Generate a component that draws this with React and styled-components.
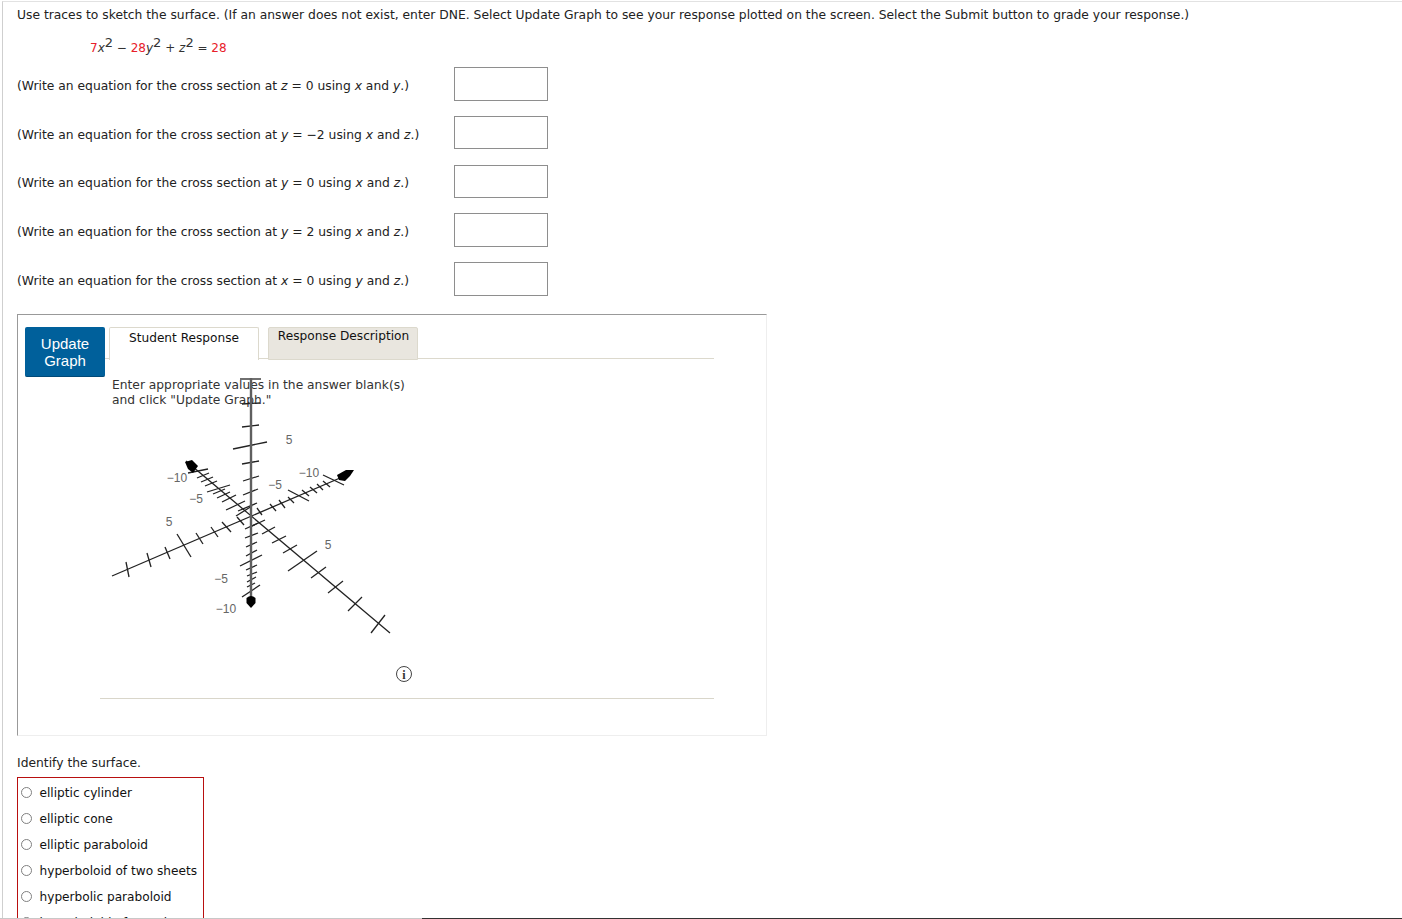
import React from "react";
import styled, { createGlobalStyle } from "styled-components";

const Global = createGlobalStyle`
  html, body { margin: 0; padding: 0; background: #fff; }
  body { font-family: "DejaVu Sans", Verdana, sans-serif; font-size: 12.32px; color: #222; }
`;
const Viewport = styled.div`
  width: 1402px; height: 919px; display: flex; flex-direction: column; overflow: hidden;
`;
const Frame = styled.div`
  flex: 0 0 916px; margin-left: 2px; padding: 0 0 0 14px; overflow: hidden;
  border-left: 1px solid #cfcfcf; border-top: 1px solid #e2e2e2; margin-top: 1px;
`;
const BottomRule = styled.div`
  flex: 0 0 1px; display: grid; grid-template-columns: 422px 1fr; margin-bottom: 1px;
`;
const RuleLight = styled.div`background: #c8c8c8;`;
const RuleDark = styled.div`background: #333;`;
const Intro = styled.div`
  height: 15px; line-height: 15px; margin-top: 6px; white-space: nowrap;
`;
const Equation = styled.div`
  margin: 16px 0 0 73px; height: 18px; line-height: 18px; white-space: nowrap; color: #333; font-size: 12px;
`;
const Red = styled.span`color: #e8202a;`;
const Sup = styled.span`font-size: 13px; position: relative; top: -5px;`;
const V = styled.i`font-style: italic;`;
const Rows = styled.div`
  display: flex; flex-direction: column; gap: 15.25px; margin-top: 10px;
`;
const Row = styled.div`
  display: grid; grid-template-columns: 437px 94px; align-items: center; height: 33.5px;
`;
const RowText = styled.span`white-space: nowrap; margin-top: 4px;`;
const AnswerInput = styled.input`
  width: 94px; height: 33.5px; box-sizing: border-box; border: 1px solid #8e8e8e; background: #fff; padding: 0; margin: 0;
`;
const GraphPanel = styled.div`
  box-sizing: border-box; width: 750px; height: 422px; margin-top: 18px; padding: 12px 0 0 7px; display: flex; align-items: flex-start;
  border-left: 1px solid #999; border-top: 1px solid #999; border-right: 1px solid #eee; border-bottom: 1px solid #eee;
`;
const UpdateButton = styled.button`
  position: relative; z-index: 2; flex: 0 0 80px; height: 50px; margin: 0 -5px 0 0; padding: 2px 0 0; border: 0; border-radius: 2px;
  border-bottom: 1px solid #004a78; background: #00609b; color: #fff;
  font-family: "Liberation Sans", Arial, sans-serif; font-size: 15px; line-height: 17px;
`;
const TabColumn = styled.div`width: 614px; display: flex; flex-direction: column;`;
const TabBar = styled.div`
  box-sizing: border-box; height: 32px; padding-left: 9px; display: flex; gap: 9px; border-bottom: 1px solid #dcd9cd; align-items: flex-start;
`;
const Tab = styled.div`
  box-sizing: border-box; width: 150px; height: 33px; text-align: center; white-space: nowrap; color: #111; font-size: 12.15px;
  border: 1px solid #dcd9cd; border-radius: 2px 2px 0 0;
  line-height: ${p => (p.$active ? "20px" : "17px")};
  border-bottom: ${p => (p.$active ? "0" : "1px solid #dcd9cd")};
  padding-left: ${p => (p.$active ? "0" : "1px")};
  background: ${p => (p.$active ? "#fff" : "#e9e6df")};
  position: relative; z-index: 1;
`;
const GraphArea = styled.div`
  position: relative; height: 340px; box-sizing: border-box; border-bottom: 1px solid #d9d6ca;
`;
const Message = styled.div`
  padding: 19px 0 0 12px; line-height: 15px; color: #333; font-size: 12.28px;
`;
const GraphSvg = styled.svg`
  position: absolute; left: 0; top: 0; width: 320px; height: 339px; overflow: visible;
`;
const Question = styled.div`height: 15px; line-height: 15px; margin-top: 20px;`;
const Options = styled.div`
  box-sizing: border-box; width: 187px; margin-top: 6px; border: 1px solid #b80f0f; padding-top: 2px; height: 170px;
`;
const Option = styled.label`
  display: flex; align-items: center; height: 26px; white-space: nowrap; padding-left: 3px; color: #111; font-size: 12.15px;
`;
const Radio = styled.span`
  box-sizing: border-box; flex: 0 0 11px; height: 11px; border: 1px solid #808080; border-radius: 50%; margin-right: 7.5px; background: #fff;
`;

const num = (n) => n.replace("-", "\u2212");

const zTicks = [
  [240,379,261,379],[242,404,260,403],[242,427,259,425],[233,449,267,442],[242,464,259,461],
  [243,481,259,476],[243,495,258,489],[238,511,257,503],
  [245,529,258,523],[245,538,258,533],[246,547,257,542],[246,556,257,550],[240,566,262,555],
  [246,570,257,565],[247,576,257,572],[247,582,256,577],[247,587,255,583],[242,597,260,585],
];
const aTicks = [
  [188,473,208,469],[197,478,209,473],[201,482,213,477],[205,486,217,481],[207,492,230,485],
  [213,494,225,489],[217,498,230,492],[222,502,236,495],[226,510,245,501],[236,516,252,506],
  [250,527,265,520],[262,534,275,527],[272,543,286,536],[283,553,297,545],[288,571,317,551],
  [311,578,326,567],[328,593,343,581],[348,611,362,597],[371,633,385,615],
];
const bTicks = [
  [126,562,129,577],[147,553,151,567],[165,547,170,559],[177,534,191,557],[196,533,203,544],
  [211,527,218,537],[222,522,231,532],[237,517,244,525],
  [257,508,262,515],[270,504,276,511],[279,500,285,508],[288,497,294,503],[288,490,309,501],
  [302,490,309,496],[310,487,317,493],[317,484,323,490],[323,481,330,487],[323,475,344,485],
];
const labels = [
  [289,444,"5"],[177,482,"-10"],[196,503,"-5"],[169,526,"5"],[309,477,"-10"],
  [275,489,"-5"],[328,549,"5"],[221,583,"-5"],[226,613,"-10"],
];
// Chart coordinates are written in page pixels; the group shifts them into the graph area.
const Chart = () => (
  <GraphSvg viewBox="0 0 320 339" aria-hidden="true">
    <g transform="translate(-100,-359)">
      <g stroke="#222" strokeWidth="1.3" fill="none">
        <line x1="186" y1="461" x2="390" y2="633" />
        <line x1="112" y1="576" x2="347" y2="475" />
        {[...zTicks, ...aTicks, ...bTicks].map((t, i) => (
          <line key={i} x1={t[0]} y1={t[1]} x2={t[2]} y2={t[3]} />
        ))}
      </g>
      <line x1="251" y1="378" x2="251" y2="600" stroke="#5f5f5f" strokeWidth="2.4" />
      <path d="M246.5 598 Q251 594 255.5 598 L255.5 603 L251 608 L246.5 603 Z" fill="#000" />
      <path d="M185 462 L192 460 L198 466 L193 473 L188 469 Z" fill="#000" />
      <path d="M337 475 L346 470 L354 470 L350 476 L345 481 L339 480 Z" fill="#000" />
      <g fontFamily="'Liberation Sans', Arial, sans-serif" fontSize="12" fill="#666" textAnchor="middle">
        {labels.map((l, i) => (
          <text key={i} x={l[0]} y={l[1]}>{num(l[2])}</text>
        ))}
      </g>
      <circle cx="404" cy="674" r="7.5" fill="#fff" stroke="#444" strokeWidth="1" />
      <text x="404" y="678.5" fontFamily="'Liberation Serif', serif" fontWeight="700" fontSize="12" textAnchor="middle" fill="#333">i</text>
    </g>
  </GraphSvg>
);

const rows = [
  [<V key="a">z</V>, " = 0 using ", <V key="b">x</V>, " and ", <V key="c">y</V>],
  [<V key="a">y</V>, " = \u22122 using ", <V key="b">x</V>, " and ", <V key="c">z</V>],
  [<V key="a">y</V>, " = 0 using ", <V key="b">x</V>, " and ", <V key="c">z</V>],
  [<V key="a">y</V>, " = 2 using ", <V key="b">x</V>, " and ", <V key="c">z</V>],
  [<V key="a">x</V>, " = 0 using ", <V key="b">y</V>, " and ", <V key="c">z</V>],
];
const options = [
  "elliptic cylinder", "elliptic cone", "elliptic paraboloid",
  "hyperboloid of two sheets", "hyperbolic paraboloid", "hyperboloid of one sheet",
];

export default function App() {
  return (
    <Viewport>
      <Global />
      <Frame>
        <Intro>Use traces to sketch the surface. (If an answer does not exist, enter DNE. Select Update Graph to see your response plotted on the screen. Select the Submit button to grade your response.)</Intro>
        <Equation>
          <Red>7</Red><V>x</V><Sup>2</Sup> − <Red>28</Red><V>y</V><Sup>2</Sup> + <V>z</V><Sup>2</Sup> = <Red>28</Red>
        </Equation>
        <Rows>
          {rows.map((r, i) => (
            <Row key={i}>
              <RowText>(Write an equation for the cross section at {r}.)</RowText>
              <AnswerInput type="text" />
            </Row>
          ))}
        </Rows>
        <GraphPanel>
          <UpdateButton>Update<br />Graph</UpdateButton>
          <TabColumn>
            <TabBar>
              <Tab $active>Student Response</Tab>
              <Tab>Response Description</Tab>
            </TabBar>
            <GraphArea>
              <Message>Enter appropriate values in the answer blank(s)<br />and click "Update Graph."</Message>
              <Chart />
            </GraphArea>
          </TabColumn>
        </GraphPanel>
        <Question>Identify the surface.</Question>
        <Options>
          {options.map((o) => (
            <Option key={o}><Radio />{o}</Option>
          ))}
        </Options>
      </Frame>
      <BottomRule><RuleLight /><RuleDark /></BottomRule>
    </Viewport>
  );
}
